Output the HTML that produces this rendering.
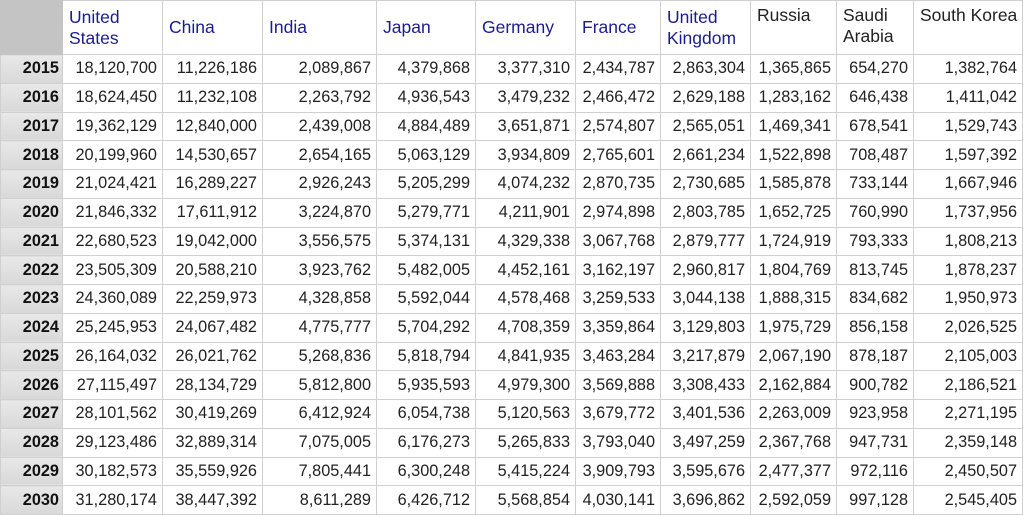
<!DOCTYPE html>
<html><head><meta charset="utf-8"><style>
html,body{margin:0;padding:0;background:#fff;width:1024px;height:515px;overflow:hidden}
table{border-collapse:collapse;table-layout:fixed;font-family:"Liberation Sans",Arial,sans-serif;position:absolute;left:0;top:0}
td,th{border:1px solid #cfcfd4;padding:0 5px 0 0;overflow:hidden;white-space:nowrap}
th{height:54px;font-weight:normal;font-size:17.5px;text-align:left;vertical-align:top;padding:4px 4px 0 6px;line-height:21px;color:#222;white-space:normal;box-sizing:border-box}
th.b{color:#1c1c8f;vertical-align:middle;padding-top:0}
th.c{background:#c4c4c4;border-color:#c4c4c4}
td{height:27.75px;font-size:16.3px;color:#222;text-align:right}
td.y{background:linear-gradient(#e8e8e8,#d8d8d8);font-weight:bold;color:#111;padding-right:3px}
</style></head><body>
<table>
<colgroup><col style="width:62px"><col style="width:100px"><col style="width:100px"><col style="width:114px"><col style="width:99px"><col style="width:100px"><col style="width:85px"><col style="width:90px"><col style="width:86px"><col style="width:77px"><col style="width:109px"></colgroup>
<tr><th class="c"></th><th class="b">United States</th><th class="b">China</th><th class="b">India</th><th class="b">Japan</th><th class="b">Germany</th><th class="b">France</th><th class="b">United Kingdom</th><th>Russia</th><th>Saudi Arabia</th><th>South Korea</th></tr>
<tr><td class="y">2015</td><td>18,120,700</td><td>11,226,186</td><td>2,089,867</td><td>4,379,868</td><td>3,377,310</td><td>2,434,787</td><td>2,863,304</td><td>1,365,865</td><td>654,270</td><td>1,382,764</td></tr>
<tr><td class="y">2016</td><td>18,624,450</td><td>11,232,108</td><td>2,263,792</td><td>4,936,543</td><td>3,479,232</td><td>2,466,472</td><td>2,629,188</td><td>1,283,162</td><td>646,438</td><td>1,411,042</td></tr>
<tr><td class="y">2017</td><td>19,362,129</td><td>12,840,000</td><td>2,439,008</td><td>4,884,489</td><td>3,651,871</td><td>2,574,807</td><td>2,565,051</td><td>1,469,341</td><td>678,541</td><td>1,529,743</td></tr>
<tr><td class="y">2018</td><td>20,199,960</td><td>14,530,657</td><td>2,654,165</td><td>5,063,129</td><td>3,934,809</td><td>2,765,601</td><td>2,661,234</td><td>1,522,898</td><td>708,487</td><td>1,597,392</td></tr>
<tr><td class="y">2019</td><td>21,024,421</td><td>16,289,227</td><td>2,926,243</td><td>5,205,299</td><td>4,074,232</td><td>2,870,735</td><td>2,730,685</td><td>1,585,878</td><td>733,144</td><td>1,667,946</td></tr>
<tr><td class="y">2020</td><td>21,846,332</td><td>17,611,912</td><td>3,224,870</td><td>5,279,771</td><td>4,211,901</td><td>2,974,898</td><td>2,803,785</td><td>1,652,725</td><td>760,990</td><td>1,737,956</td></tr>
<tr><td class="y">2021</td><td>22,680,523</td><td>19,042,000</td><td>3,556,575</td><td>5,374,131</td><td>4,329,338</td><td>3,067,768</td><td>2,879,777</td><td>1,724,919</td><td>793,333</td><td>1,808,213</td></tr>
<tr><td class="y">2022</td><td>23,505,309</td><td>20,588,210</td><td>3,923,762</td><td>5,482,005</td><td>4,452,161</td><td>3,162,197</td><td>2,960,817</td><td>1,804,769</td><td>813,745</td><td>1,878,237</td></tr>
<tr><td class="y">2023</td><td>24,360,089</td><td>22,259,973</td><td>4,328,858</td><td>5,592,044</td><td>4,578,468</td><td>3,259,533</td><td>3,044,138</td><td>1,888,315</td><td>834,682</td><td>1,950,973</td></tr>
<tr><td class="y">2024</td><td>25,245,953</td><td>24,067,482</td><td>4,775,777</td><td>5,704,292</td><td>4,708,359</td><td>3,359,864</td><td>3,129,803</td><td>1,975,729</td><td>856,158</td><td>2,026,525</td></tr>
<tr><td class="y">2025</td><td>26,164,032</td><td>26,021,762</td><td>5,268,836</td><td>5,818,794</td><td>4,841,935</td><td>3,463,284</td><td>3,217,879</td><td>2,067,190</td><td>878,187</td><td>2,105,003</td></tr>
<tr><td class="y">2026</td><td>27,115,497</td><td>28,134,729</td><td>5,812,800</td><td>5,935,593</td><td>4,979,300</td><td>3,569,888</td><td>3,308,433</td><td>2,162,884</td><td>900,782</td><td>2,186,521</td></tr>
<tr><td class="y">2027</td><td>28,101,562</td><td>30,419,269</td><td>6,412,924</td><td>6,054,738</td><td>5,120,563</td><td>3,679,772</td><td>3,401,536</td><td>2,263,009</td><td>923,958</td><td>2,271,195</td></tr>
<tr><td class="y">2028</td><td>29,123,486</td><td>32,889,314</td><td>7,075,005</td><td>6,176,273</td><td>5,265,833</td><td>3,793,040</td><td>3,497,259</td><td>2,367,768</td><td>947,731</td><td>2,359,148</td></tr>
<tr><td class="y">2029</td><td>30,182,573</td><td>35,559,926</td><td>7,805,441</td><td>6,300,248</td><td>5,415,224</td><td>3,909,793</td><td>3,595,676</td><td>2,477,377</td><td>972,116</td><td>2,450,507</td></tr>
<tr><td class="y">2030</td><td>31,280,174</td><td>38,447,392</td><td>8,611,289</td><td>6,426,712</td><td>5,568,854</td><td>4,030,141</td><td>3,696,862</td><td>2,592,059</td><td>997,128</td><td>2,545,405</td></tr>
</table>
</body></html>
